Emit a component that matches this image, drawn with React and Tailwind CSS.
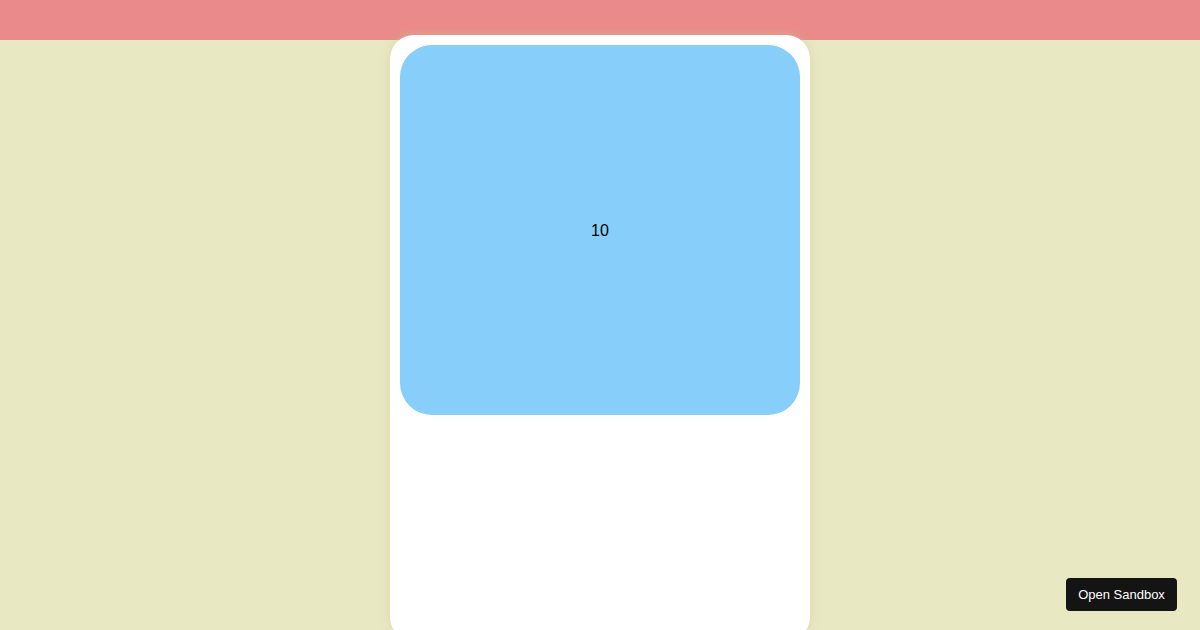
export default function App() {
  return (
    <div className="relative h-[630px] w-[1200px] overflow-hidden bg-[#e8e9c3]" style={{ fontFamily: '"Liberation Sans", Arial, sans-serif' }}>
      <div className="h-10 bg-[#eb8a8a]" />
      <div className="relative mx-auto -mt-[5px] h-[606px] w-[420px] rounded-3xl bg-white p-[10px] shadow-[0_0_8px_2px_rgba(200,200,150,0.35)]">
        <div className="flex h-[370px] items-center justify-center rounded-[32px] bg-[#88cefa] pt-[1px] text-base text-black">
          10
        </div>
      </div>
      <button className="absolute left-[1066px] top-[578px] flex h-[33px] w-[111px] items-center justify-center rounded bg-[#141414] text-[13px] text-white">
        Open Sandbox
      </button>
    </div>
  );
}
